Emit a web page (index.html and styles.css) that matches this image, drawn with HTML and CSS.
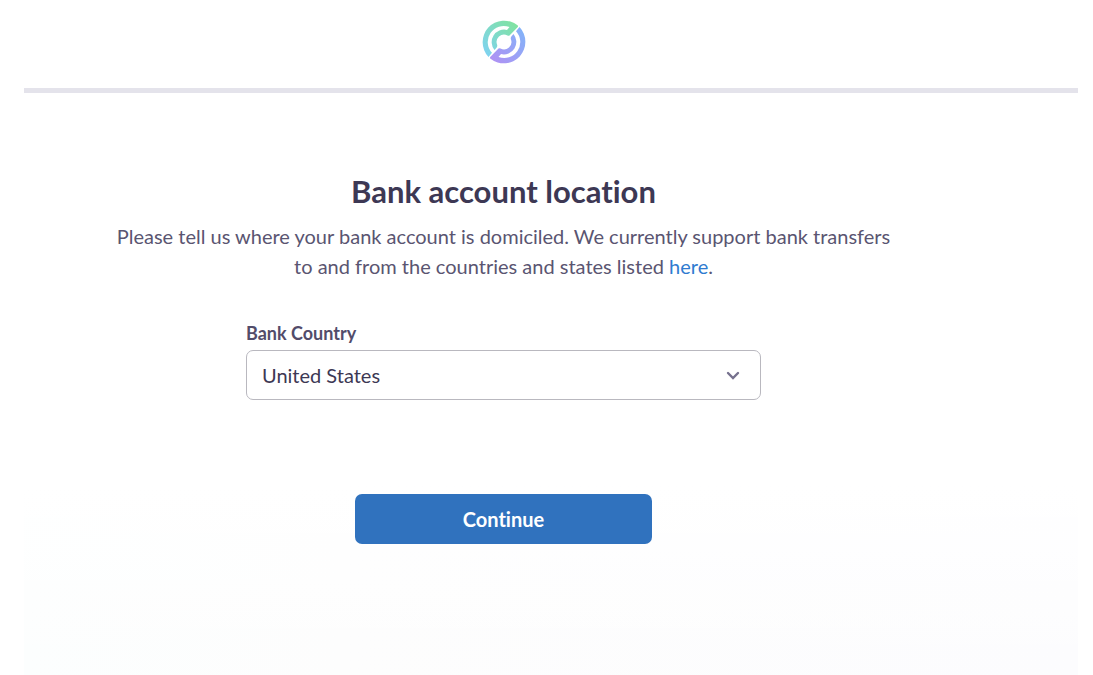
FILE: index.html
```html
<!DOCTYPE html>
<html lang="en">
<head>
    <meta charset="UTF-8">
    <meta name="viewport" content="width=device-width, initial-scale=1.0">
    <title>Bank account location</title>
    <link rel="stylesheet" href="styles.css">
</head>
<body>

<div class="page">
    <header class="header">
        <svg class="logo" viewBox="0 0 44 44" aria-hidden="true">
            <defs>
                <linearGradient id="green" x1="0" y1="1" x2="1" y2="0">
                    <stop offset="0.1" stop-color="#7fd3ee"/>
                    <stop offset="1" stop-color="#80e499"/>
                </linearGradient>
                <linearGradient id="purple" x1="0" y1="1" x2="1" y2="0">
                    <stop offset="0" stop-color="#b38ff3"/>
                    <stop offset="1" stop-color="#7fb6f9"/>
                </linearGradient>
            </defs>
            <path fill="url(#green)" d="M6.500 36.900 A21.500 21.500 0 0 1 35.500 5.300 Q36.500 6 35.800 7 L27.500 15.400 Q26.600 16.200 25.500 15.400 A7.500 7.500 0 0 0 15.200 25 Q15.500 26.500 14.500 27.800 L12.500 30 A12.500 12.500 0 0 1 25 9.900 L27.500 7 A16 16 0 0 0 10 32.800 Z"/>
            <path fill="url(#purple)" d="M37.500 7.100 A21.500 21.500 0 0 1 8.500 38.700 Q7.500 38 8.200 37 L16.500 28.600 Q17.400 27.800 18.500 28.600 A7.500 7.500 0 0 0 28.800 19 Q28.500 17.500 29.500 16.200 L31.500 14 A12.500 12.500 0 0 1 19 34.100 L16.500 37 A16 16 0 0 0 34 11.200 Z"/>
        </svg>
    </header>

    <main class="content">
        <h1>Bank account location</h1>
        <p class="intro">Please tell us where your bank account is domiciled. We currently support bank transfers to and from the countries and states listed <a href="#">here</a>.</p>

        <form class="bank-form">
            <div class="field">
                <label for="country">Bank Country</label>
                <div class="select-wrap">
                    <select id="country" name="country">
                        <option>United States</option>
                    </select>
                    <svg class="chevron" viewBox="0 0 14 10" aria-hidden="true">
                        <path d="M2 2l5 5 5-5"/>
                    </svg>
                </div>
            </div>
            <button type="submit">Continue</button>
        </form>
    </main>
</div>

</body>
</html>
```
FILE: styles.css
```css
* {
    box-sizing: border-box;
}
body {
    font-family: Lato, "Liberation Sans", sans-serif;
    font-variant-ligatures: none;
    margin: 0;
    padding: 0 15px 0 24px;
    background-color: #ffffff;
    color: #3d3854;
}
/* Very light tint towards the bottom of the page */
.page {
    min-height: 100vh;
    background: linear-gradient(#ffffff 72%, rgba(255, 255, 255, 0)), linear-gradient(to right, #fcfefe, #fdfdfd 30%, #fcfcfe);
}
.header {
    padding: 20px 95px 24px 0;
    border-bottom: 5px solid #e4e3eb;
    text-align: center;
}
.logo {
    display: block;
    width: 44px;
    height: 44px;
    margin: 0 auto;
}
.content {
    padding: 79px 95px 0 0;
    text-align: center;
}
h1 {
    margin: 0;
    font-size: 31px;
    line-height: 38px;
}
.intro {
    max-width: 780px;
    margin: 11px auto 0;
    font-size: 20px;
    line-height: 30px;
    color: #5a5571;
}
.intro a {
    color: #2f7bd0;
    text-decoration: none;
}
.bank-form {
    display: flex;
    flex-direction: column;
    align-items: center;
    margin-top: 41px;
}
.field {
    width: 100%;
    max-width: 515px;
    text-align: left;
}
label {
    display: block;
    margin-bottom: 6px;
    font-size: 18px;
    font-weight: bold;
    line-height: 22px;
    color: #524c6a;
}
.select-wrap {
    position: relative;
}
select {
    display: block;
    width: 100%;
    height: 50px;
    padding: 0 15px;
    border: 1px solid #b9b8bf;
    border-radius: 7px;
    background: #ffffff;
    font-family: inherit;
    font-size: 20px;
    color: #3d3854;
    appearance: none;
}
/* Arrow drawn over the select */
.chevron {
    position: absolute;
    top: 21px;
    right: 21px;
    width: 14px;
    height: 10px;
    fill: none;
    stroke: #76718e;
    stroke-width: 2.4;
    stroke-linecap: round;
    pointer-events: none;
}
button {
    width: 100%;
    max-width: 297px;
    height: 50px;
    margin-top: 94px;
    border: none;
    border-radius: 7px;
    background-color: #3072be;
    color: #ffffff;
    font-family: inherit;
    font-size: 20px;
    font-variant-ligatures: none;
    font-weight: bold;
    cursor: pointer;
}
button:hover {
    background-color: #28639f;
}
```
